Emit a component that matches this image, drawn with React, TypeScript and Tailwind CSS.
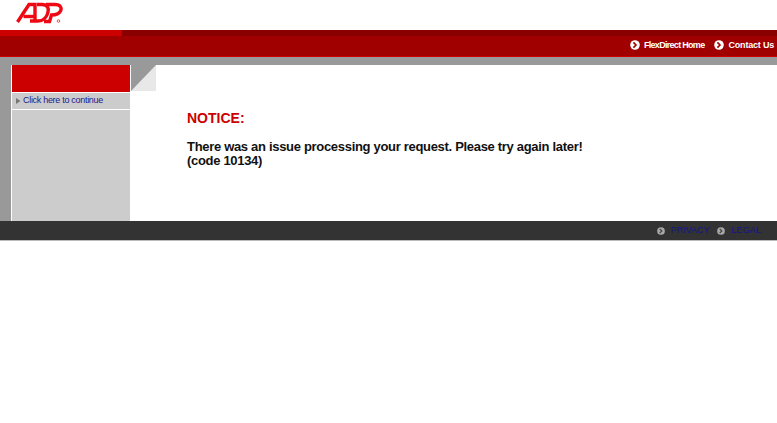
const FONT = "font-['Liberation_Sans',Arial,sans-serif]";

function AdpLogo() {
  return (
    <svg width="48" height="24" viewBox="0 0 48 24" className="block" aria-label="ADP">
      <g fill="none" stroke="#ee0a14" strokeWidth="3.4" strokeLinejoin="miter">
        <path d="M2.5 22 L14 4.5 H20 V21" />
        <path d="M8.5 16.5 H19" />
        <path d="M22 4.5 H27 C32.5 4.5 34 8 33 12 C32 17.5 28 21 23 21 H15" />
        <path d="M31 4.5 H40 C45.5 4.5 47 8 45.5 11 C44 14 41 15 36.5 15 L34.5 21.5 H29" />
      </g>
      <circle cx="43.5" cy="21" r="1.3" fill="none" stroke="#ee0a14" strokeWidth="0.7" />
    </svg>
  );
}

function ArrowDot({ light, size = 10 }: { light?: boolean; size?: number }) {
  return (
    <svg width={size} height={size} viewBox="0 0 10 10" className="block shrink-0">
      <circle cx="5" cy="5" r="4.8" fill={light ? "#ffffff" : "#a8a8a8"} />
      <path d="M3.4 2.4 L6 5 L3.4 7.6" fill="none" stroke={light ? "#a00000" : "#444444"} strokeWidth="1.6" />
    </svg>
  );
}

function TopLink({ label, tracking }: { label: string; tracking: string }) {
  return (
    <a className={`flex items-center gap-[4px] text-[9px] leading-[10px] font-bold text-white ${tracking}`}>
      <ArrowDot light />
      <span>{label}</span>
    </a>
  );
}

function FooterLink({ label, tracking }: { label: string; tracking: string }) {
  return (
    <a className={`flex items-center gap-[6px] text-[9px] text-[#14148c] ${tracking}`}>
      <ArrowDot size={8} />
      <span>{label}</span>
    </a>
  );
}

export default function App() {
  return (
    <div className={`${FONT} w-[777px] h-[423px] bg-white overflow-hidden flex flex-col`}>
      <header className="h-[30px] pl-[15px]">
        <AdpLogo />
      </header>

      <div className="h-[27px] bg-[#a00000] flex flex-col border-b border-[#cc0000] box-border">
        <div className="h-[6px] flex">
          <div className="w-[122px] bg-[#cc0000]" />
          <div className="flex-1 bg-[#8a0000]" />
        </div>
        <nav className="flex-1 flex items-start justify-end gap-[10px] pr-[3px] pt-[4px]">
          <TopLink label="FlexDirect Home" tracking="tracking-[-0.7px]" />
          <TopLink label="Contact Us" tracking="tracking-[-0.2px]" />
        </nav>
      </div>

      <div className="h-[8px] bg-[#999999]" />

      <main className="h-[156px] flex">
        <div className="w-[11px] bg-[#999999]" />
        <aside className="w-[118px] ml-px mr-px flex flex-col">
          <div className="h-[27px] bg-[#cc0000]" />
          <div className="h-[16px] mt-px bg-[#cccccc] flex items-center pl-[4px] gap-[2px]">
            <svg width="5" height="6" viewBox="0 0 5 6" className="block shrink-0">
              <path d="M0 0 L4.5 3 L0 6 Z" fill="#777777" />
            </svg>
            <span className="text-[9px] text-[#1a1a8c] tracking-[-0.3px]">Click here to continue</span>
          </div>
          <div className="flex-1 mt-px bg-[#cccccc]" />
        </aside>
        <div className="flex-1 flex flex-col">
          <svg width="25" height="26" viewBox="0 0 25 26" className="block shrink-0">
            <rect width="25" height="26" fill="#e8e8e8" />
            <path d="M0 0 H25 L0 26 Z" fill="#999999" />
          </svg>
          <section className="ml-[56px] mt-[18px]">
            <h1 className="text-[14px] leading-[18px] font-bold text-[#cc0000]">NOTICE:</h1>
            <p className="mt-[13px] text-[13px] leading-[14px] font-bold text-[#111111] tracking-[-0.31px]">
              There was an issue processing your request. Please try again later!
              <br />
              (code 10134)
            </p>
          </section>
        </div>
      </main>

      <footer className="h-[20px] bg-[#333333] border-b border-[#bbbbbb] box-border flex items-center justify-end gap-[8px] pr-[16px]">
        <FooterLink label="PRIVACY" tracking="tracking-[0px]" />
        <FooterLink label="LEGAL" tracking="tracking-[0.1px]" />
      </footer>
    </div>
  );
}
